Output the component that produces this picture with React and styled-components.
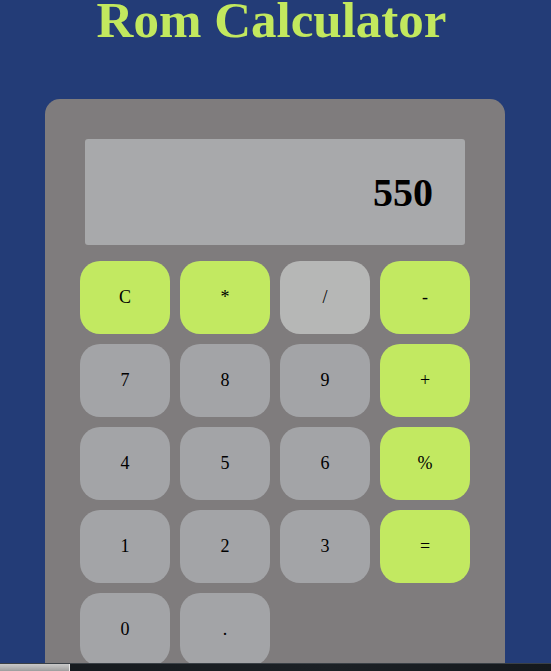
import React, { useState } from "react";
import styled, { createGlobalStyle } from "styled-components";

const GlobalStyle = createGlobalStyle`
  html, body {
    margin: 0;
    padding: 0;
    background-color: #233c77;
    font-family: "Liberation Serif", "Times New Roman", serif;
    overflow: hidden;
  }
`;

const Page = styled.div`
  display: flex;
  flex-direction: column;
  align-items: center;
  min-height: 100vh;
`;

const Title = styled.h1`
  margin: 0 0 59px;
  font-size: 51px;
  line-height: 40px;
  font-weight: 700;
  color: #c2e85e;
  transform: translateX(-4px);
`;

const Calculator = styled.div`
  width: 460px;
  margin-right: 1px;
  box-sizing: border-box;
  padding: 40px 35px 40px;
  background-color: #7f7c7d;
  border-radius: 15px;
`;

const Display = styled.div`
  height: 106px;
  margin: 0 5px 16px;
  padding-right: 32px;
  display: flex;
  align-items: center;
  justify-content: flex-end;
  background-color: #a8a9ab;
  border-radius: 3px;
  font-size: 40px;
  font-weight: 700;
  color: #000;
`;

const Keys = styled.div`
  display: grid;
  grid-template-columns: repeat(4, 90px);
  grid-auto-rows: 73px;
  gap: 10px;
`;

const Key = styled.button`
  border: none;
  border-radius: 20px;
  padding: 0;
  font-family: "Liberation Serif", "Times New Roman", serif;
  font-size: 18px;
  color: #000;
  cursor: pointer;
  background-color: ${(p) => (p.$accent ? "#c2e961" : p.$hover ? "#b6b7b6" : "#a3a4a7")};
`;

const ScrollBar = styled.div`
  position: fixed;
  left: 0;
  right: 0;
  bottom: 0;
  height: 7px;
  border-top: 1px solid #3a4046;
  background: linear-gradient(90deg, #15191d, #1c2126 60%, #15191d);
`;

const Thumb = styled.div`
  width: 69px;
  height: 100%;
  border-right: 1px solid #e8e8e8;
  background: linear-gradient(180deg, #c9c9c9, #9e9e9e);
`;

const keys = [
  { label: "C", accent: true },
  { label: "*", accent: true },
  { label: "/", hover: true },
  { label: "-", accent: true },
  { label: "7" },
  { label: "8" },
  { label: "9" },
  { label: "+", accent: true },
  { label: "4" },
  { label: "5" },
  { label: "6" },
  { label: "%", accent: true },
  { label: "1" },
  { label: "2" },
  { label: "3" },
  { label: "=", accent: true },
  { label: "0" },
  { label: "." },
];

const App = () => {
  const [value] = useState("550");
  return (
    <>
      <GlobalStyle />
      <Page>
        <Title>Rom Calculator</Title>
        <Calculator>
          <Display>{value}</Display>
          <Keys>
            {keys.map((k) => (
              <Key key={k.label} $accent={k.accent} $hover={k.hover}>
                {k.label}
              </Key>
            ))}
          </Keys>
        </Calculator>
      </Page>
      <ScrollBar>
        <Thumb />
      </ScrollBar>
    </>
  );
};

export default App;
